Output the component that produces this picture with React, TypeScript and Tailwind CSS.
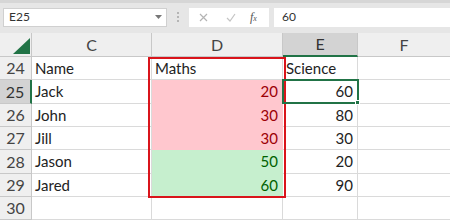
import React from 'react';

type Row = {
  num: number;
  h: string;
  c: string;
  d: string;
  e: string;
  tone?: 'bad' | 'good';
};

const rows: Row[] = [
  { num: 24, h: 'h-[23px]', c: 'Name', d: 'Maths', e: 'Science' },
  { num: 25, h: 'h-[24px]', c: 'Jack', d: '20', e: '60', tone: 'bad' },
  { num: 26, h: 'h-[23px]', c: 'John', d: '30', e: '80', tone: 'bad' },
  { num: 27, h: 'h-[23px]', c: 'Jill', d: '30', e: '30', tone: 'bad' },
  { num: 28, h: 'h-[24px]', c: 'Jason', d: '50', e: '20', tone: 'good' },
  { num: 29, h: 'h-[23px]', c: 'Jared', d: '60', e: '90', tone: 'good' },
  { num: 30, h: 'h-[23px]', c: '', d: '', e: '' },
];

// filled cells hide their gridlines, like Excel does
const toneClasses = {
  bad: 'bg-[#ffc7ce] text-[#9c0006] justify-end border-[#ffc7ce]',
  good: 'bg-[#c6efce] text-[#006100] justify-end border-[#c6efce]',
};

const App: React.FC = () => {
  return (
    <div className="w-[450px] h-[222px] overflow-hidden bg-white font-['Lato',sans-serif]">
      {/* Formula bar */}
      <div className="flex h-[33px] items-center border-t-[3px] border-[#d6d6d6] bg-[#e6e6e6] pb-[2px]">
        <div className="ml-[3px] flex h-[19px] w-[164px] items-center justify-between border border-[#d0d0d0] bg-white pl-[5px] pr-[4px] text-[12px] text-[#333]">
          <span>E25</span>
          <svg width="7" height="4" viewBox="0 0 7 4">
            <path d="M0 0 L7 0 L3.5 4 Z" fill="#777" />
          </svg>
        </div>
        <div className="ml-[10px] flex flex-col gap-[2px]">
          <span className="h-[2px] w-[2px] bg-[#b5b5b5]" />
          <span className="h-[2px] w-[2px] bg-[#b5b5b5]" />
          <span className="h-[2px] w-[2px] bg-[#b5b5b5]" />
        </div>
        <div className="ml-[10px] flex h-[19px] w-[80px] items-center bg-white text-[#b8b8b8]">
          <svg className="ml-[10px]" width="9" height="9" viewBox="0 0 9 9">
            <path d="M1 1 L8 8 M8 1 L1 8" stroke="#b4b4b4" strokeWidth="1.2" />
          </svg>
          <svg className="ml-[18px]" width="10" height="9" viewBox="0 0 10 9">
            <path d="M1 5 L4 8 L9 1" stroke="#c4c4c4" strokeWidth="1.2" fill="none" />
          </svg>
          <span className="ml-[14px] font-['Liberation_Serif',serif] text-[12px] italic leading-none text-[#555]">
            f<span className="text-[8px]">x</span>
          </span>
        </div>
        <div className="ml-[5px] flex h-[19px] flex-1 items-center bg-white pl-[8px] text-[12px] text-[#333]">
          60
        </div>
      </div>

      {/* Sheet grid */}
      <div className="relative">
        <div className="grid grid-cols-[32px_120px_131px_75px_1fr] text-[15px] text-[#222]">
          {/* header row */}
          <div className="relative h-[24px] border-b border-r border-[#c8c8c8] bg-[#efefef]">
            <svg className="absolute left-[13px] top-[5px]" width="17" height="16" viewBox="0 0 17 16">
              <path d="M0 16 L17 0 L17 16 Z" fill="#217346" />
            </svg>
          </div>
          <div className="flex h-[24px] items-center justify-center border-b border-r border-[#c8c8c8] bg-[#efefef] text-[16px] text-[#444]">
            C
          </div>
          <div className="flex h-[24px] items-center justify-center border-b border-r border-[#c8c8c8] bg-[#efefef] text-[16px] text-[#444]">
            D
          </div>
          <div className="flex h-[24px] items-center justify-center border-b-2 border-r border-b-[#217346] border-r-[#c8c8c8] bg-[#d3d3d3] text-[16px] text-[#333]">
            E
          </div>
          <div className="flex h-[24px] items-center justify-center border-b border-[#c8c8c8] bg-[#efefef] text-[16px] text-[#444]">
            F
          </div>

          {rows.map((row) => (
            <React.Fragment key={row.num}>
              <div
                className={`flex ${row.h} items-center justify-center border-b border-[#c8c8c8] text-[16px] ${
                  row.num === 25
                    ? 'border-r-2 border-r-[#217346] bg-[#d3d3d3] text-[#333]'
                    : 'border-r border-r-[#c8c8c8] bg-[#efefef] text-[#444]'
                }`}
              >
                {row.num}
              </div>
              <div className={`flex ${row.h} items-center border-b border-r border-[#dadada] pl-[3px]`}>
                {row.c}
              </div>
              <div
                className={`flex ${row.h} items-center border-b border-r ${
                  row.tone ? toneClasses[row.tone] + ' pr-[4px]' : 'border-[#dadada] pl-[3px]'
                }`}
              >
                {row.d}
              </div>
              <div
                className={`flex ${row.h} items-center whitespace-nowrap border-b border-r border-[#dadada] ${
                  row.num === 24 ? 'pl-[3px]' : 'justify-end pr-[4px]'
                }`}
              >
                {row.e}
              </div>
              <div className={`${row.h} border-b border-[#dadada]`} />
            </React.Fragment>
          ))}
        </div>

        {/* red outline around Maths */}
        <div className="pointer-events-none absolute left-[148px] top-[24px] h-[141px] w-[138px] border-2 border-[#d9141b]" />

        {/* active cell E25 */}
        <div className="pointer-events-none absolute left-[282px] top-[46px] h-[25px] w-[77px] border-2 border-[#217346]">
          <span className="absolute -bottom-[3px] -right-[3px] h-[5px] w-[5px] border border-white bg-[#217346]" />
        </div>
      </div>
    </div>
  );
};

export default App;
